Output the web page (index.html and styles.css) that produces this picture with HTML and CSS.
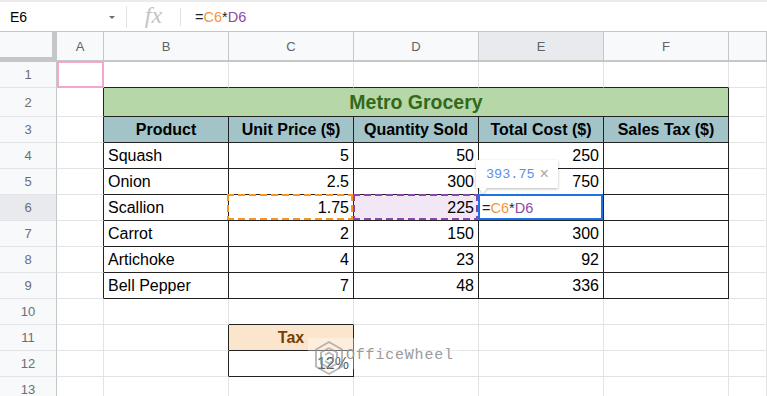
FILE: index.html
```html
<!DOCTYPE html>
<html>
<head>
<meta charset="utf-8">
<link rel="stylesheet" href="styles.css">
</head>
<body>
<div class="fbar">
  <div class="namebox"><span>E6</span><span class="caret"></span></div>
  <div class="sep"></div>
  <div class="fx">fx</div>
  <div class="sep short"></div>
  <div class="formula">=<span class="r1">C6</span>*<span class="r2">D6</span></div>
</div>
<div class="sheet">
  <div class="corner"></div>
  <div class="ch">A</div><div class="ch">B</div><div class="ch">C</div><div class="ch">D</div><div class="ch sel">E</div><div class="ch">F</div><div class="ch"></div>

  <div class="rh">1</div>
  <div class="c a1"></div><div class="c bt"></div><div class="c bt"></div><div class="c bt"></div><div class="c bt"></div><div class="c bt"></div><div class="c"></div>

  <div class="rh">2</div>
  <div class="c bl"></div><div class="c t title">Metro Grocery</div><div class="c"></div>

  <div class="rh">3</div>
  <div class="c bl"></div><div class="c t th">Product</div><div class="c t th">Unit Price ($)</div><div class="c t th">Quantity Sold</div><div class="c t th">Total Cost ($)</div><div class="c t th">Sales Tax ($)</div><div class="c"></div>

  <div class="rh">4</div>
  <div class="c bl"></div><div class="c t">Squash</div><div class="c t num">5</div><div class="c t num">50</div><div class="c t num">250</div><div class="c t"></div><div class="c"></div>

  <div class="rh">5</div>
  <div class="c bl"></div><div class="c t">Onion</div><div class="c t num">2.5</div><div class="c t num">300</div><div class="c t num">750</div><div class="c t"></div><div class="c"></div>

  <div class="rh sel">6</div>
  <div class="c bl"></div><div class="c t">Scallion</div><div class="c t num ref1">1.75</div><div class="c t num ref2">225</div>
  <div class="c t active">
    <span class="edit">=<span class="r1">C6</span>*<span class="r2">D6</span></span>
    <div class="tip"><span class="tipval">393.75</span><span class="tipx">×</span><span class="tiparrow"></span></div>
  </div>
  <div class="c t"></div><div class="c"></div>

  <div class="rh">7</div>
  <div class="c bl"></div><div class="c t">Carrot</div><div class="c t num">2</div><div class="c t num">150</div><div class="c t num">300</div><div class="c t"></div><div class="c"></div>

  <div class="rh">8</div>
  <div class="c bl"></div><div class="c t">Artichoke</div><div class="c t num">4</div><div class="c t num">23</div><div class="c t num">92</div><div class="c t"></div><div class="c"></div>

  <div class="rh">9</div>
  <div class="c bl"></div><div class="c t">Bell Pepper</div><div class="c t num">7</div><div class="c t num">48</div><div class="c t num">336</div><div class="c t"></div><div class="c"></div>

  <div class="rh">10</div>
  <div class="c"></div><div class="c"></div><div class="c bt"></div><div class="c"></div><div class="c"></div><div class="c"></div><div class="c"></div>

  <div class="rh">11</div>
  <div class="c"></div><div class="c bl"></div><div class="c t tax">Tax</div><div class="c"></div><div class="c"></div><div class="c"></div><div class="c"></div>

  <div class="rh">12</div>
  <div class="c"></div><div class="c bl"></div><div class="c t num">12%</div><div class="c"></div><div class="c"></div><div class="c"></div><div class="c"></div>

  <div class="rh">13</div>
  <div class="c"></div><div class="c"></div><div class="c"></div><div class="c"></div><div class="c"></div><div class="c"></div><div class="c"></div>
</div>

<div class="watermark">
  <svg class="wm-logo" width="32" height="36" viewBox="0 0 32 36">
    <g fill="none" stroke="#8c8c8c" stroke-width="2" stroke-linejoin="round">
      <polygon points="16,2 29,9.5 29,26.5 16,34 3,26.5 3,9.5"/>
      <polyline points="16,8 24,12.5 24,17"/>
      <polyline points="16,8 8,12.5 8,23.5 16,28 24,23.5"/>
      <polyline points="12,15 16,12.5 20,15 20,21 16,23.5 12,21"/>
    </g>
  </svg>
  <span class="wm-text">OfficeWheel</span>
</div>
</body>
</html>
```

FILE: styles.css
```css
* { box-sizing: border-box; }

body {
  margin: 0;
  width: 767px;
  height: 396px;
  overflow: hidden;
  background: #ffffff;
  font-family: "Liberation Sans", Arial, sans-serif;
  color: #000;
  position: relative;
}

/* formula bar */
.fbar {
  height: 32px;
  border-top: 2px solid #ebebeb;
  border-bottom: 1px solid #c4c7c5;
  display: flex;
  align-items: center;
}
.namebox {
  width: 126px;
  height: 100%;
  display: flex;
  align-items: center;
  justify-content: space-between;
  padding: 0 11px 0 10px;
  font-size: 14px;
  color: #000;
}
.caret {
  width: 0;
  height: 0;
  border-left: 3px solid transparent;
  border-right: 3px solid transparent;
  border-top: 3px solid #6b6b6b;
  margin-top: 2px;
}
.sep {
  width: 1px;
  height: 22px;
  background: #e2e2e2;
}
.sep.short { height: 18px; }
.fx {
  width: 53px;
  text-align: center;
  font-family: "Liberation Serif", "Times New Roman", serif;
  font-style: italic;
  font-size: 24px;
  color: #c4c4c4;
  line-height: 1;
  margin-top: -3px;
}
.formula {
  padding-left: 14px;
  font-size: 14.5px;
  color: #222;
}
.r1 { color: #f7953b; }
.r2 { color: #8a4aa5; }

/* grid */
.sheet {
  display: grid;
  grid-template-columns: 57px 47px repeat(5, 125px) 38px;
  grid-template-rows: 30px 26px 29px repeat(11, 26px);
}
.corner {
  background: #f8f9fa;
  border-right: 5px solid #c4c6c8;
  border-bottom: 5px solid #c4c6c8;
}
.ch {
  background: #f8f9fa;
  border-right: 1px solid #c4c7c5;
  border-bottom: 2px solid #c4c7c5;
  display: flex;
  align-items: center;
  justify-content: center;
  font-size: 13px;
  color: #5f6368;
  padding-top: 1px;
}
.ch.sel, .rh.sel { background: #e8eaed; }
.rh {
  background: #f8f9fa;
  border-right: 1px solid #c4c7c5;
  border-bottom: 1px solid #e1e3e6;
  display: flex;
  align-items: center;
  justify-content: center;
  font-size: 13px;
  color: #6b6f74;
}
.c {
  position: relative;
  border-right: 1px solid #e2e3e3;
  border-bottom: 1px solid #e2e3e3;
  display: flex;
  align-items: center;
  padding: 1px 4px 0;
  font-size: 16px;
  white-space: nowrap;
}
.t { border-right-color: #222; border-bottom-color: #222; }
.bl { border-right-color: #222; }
.bt { border-bottom-color: #222; }
.num { justify-content: flex-end; }

.title {
  grid-column: span 5;
  background: #b6d7a8;
  justify-content: center;
  font-weight: bold;
  font-size: 19.5px;
  color: #33691a;
}
.th {
  background: #a2c4c9;
  justify-content: center;
  font-weight: bold;
}
.tax {
  background: #fce5cd;
  justify-content: center;
  font-weight: bold;
  color: #783f04;
}

/* selection overlays */
.a1::after {
  content: "";
  position: absolute;
  top: -1px; left: 0; right: -1px; bottom: -1px;
  border: 2px solid #f5a6cd;
}
.ref1::after, .ref2::after {
  content: "";
  position: absolute;
  top: -1px; bottom: 0;
  background:
    repeating-linear-gradient(90deg, var(--dc) 0 7px, transparent 7px 11px) left top / 100% 2px no-repeat,
    repeating-linear-gradient(90deg, var(--dc) 0 7px, transparent 7px 11px) left bottom / 100% 2px no-repeat,
    repeating-linear-gradient(180deg, var(--dc) 0 7px, transparent 7px 11px) left top / 2px 100% no-repeat,
    repeating-linear-gradient(180deg, var(--dc) 0 7px, transparent 7px 11px) right top / 2px 100% no-repeat;
}
.ref1 { --dc: #f7971e; }
.ref1::after { left: -2px; right: 0; }
.ref2 { --dc: #8e44ad; background: #f1e7f5; }
.ref2::after { left: -1px; right: 0; }

.active::after {
  content: "";
  position: absolute;
  top: -1px; left: -1px; right: 0; bottom: 0;
  border: 2px solid #1a73e8;
}
.edit {
  font-size: 14.5px;
  color: #222;
  margin-left: -1px;
}
.tip {
  position: absolute;
  left: -3px;
  top: -35px;
  width: 82px;
  height: 28px;
  background: #fff;
  box-shadow: 0 1px 3px rgba(0,0,0,0.28);
  border-radius: 1px;
  display: flex;
  align-items: center;
  padding-left: 10px;
  z-index: 3;
}
.tipval {
  font-family: "Liberation Mono", "Courier New", monospace;
  font-size: 13.5px;
  color: #5f8ee8;
}
.tipx {
  margin-left: 5px;
  font-size: 16px;
  color: #a8a8a8;
}
.tiparrow {
  position: absolute;
  left: 3px;
  top: 28px;
  width: 0;
  height: 0;
  border-left: 4px solid transparent;
  border-right: 4px solid transparent;
  border-top: 6px solid #fff;
  filter: drop-shadow(0 1px 1px rgba(0,0,0,0.25));
}

/* watermark */
.watermark {
  position: absolute;
  left: 308px;
  top: 338px;
  width: 150px;
  height: 31px;
  background: rgba(255,255,255,0.35);
}
.wm-logo {
  position: absolute;
  left: 5px;
  top: 2px;
  opacity: 0.6;
}
.wm-text {
  position: absolute;
  left: 38px;
  top: 9px;
  font-family: "Liberation Mono", "Courier New", monospace;
  font-size: 15px;
  letter-spacing: 0.8px;
  color: #9b9b9b;
}
```
